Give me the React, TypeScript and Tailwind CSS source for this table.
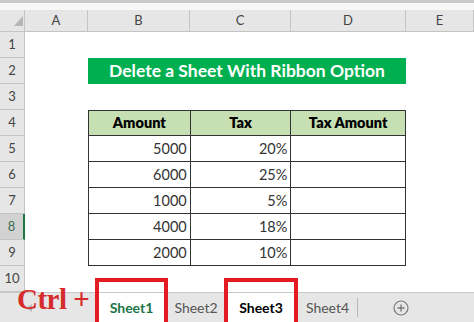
const cols = [
  { label: "A", w: "w-[63px]" },
  { label: "B", w: "w-[102px]" },
  { label: "C", w: "w-[101px]" },
  { label: "D", w: "w-[115px]" },
  { label: "E", w: "w-[68px]" },
];

const rows = [
  ["5000", "20%"],
  ["6000", "25%"],
  ["1000", "5%"],
  ["4000", "18%"],
  ["2000", "10%"],
];

export default function App() {
  return (
    <div className="relative w-[474px] h-[322px] overflow-hidden bg-white font-['Lato','Open_Sans',sans-serif] text-[#444]">
      <div className="h-[3px] bg-[#c9c9c9]" />
      <div className="h-[7px] bg-[#f7f7f7]" />

      {/* column headers */}
      <div className="flex h-[22px] bg-[#e6e6e6] border-b border-[#c4c4c4]">
        <div className="relative w-[25px] border-r border-[#c4c4c4]">
          <svg className="absolute left-[14px] top-[6px]" width="9" height="10" viewBox="0 0 9 10">
            <polygon points="9,0 9,10 0,10" fill="#b5b5b5" />
          </svg>
        </div>
        {cols.map((c) => (
          <div
            key={c.label}
            className={`${c.w} flex items-center justify-center border-r border-[#c4c4c4] text-[13px] text-[#444]`}
          >
            {c.label}
          </div>
        ))}
      </div>

      <div className="flex">
        {/* row headers */}
        <div className="flex flex-col w-[25px]">
          {[1, 2, 3, 4, 5, 6, 7, 8, 9, 10].map((n) => (
            <div
              key={n}
              className={`h-[26px] flex items-center justify-center border-b border-[#c4c4c4] text-[13px] ${
                n === 8
                  ? "bg-[#d2d2d2] text-[#3d6b4e] border-r-2 border-r-[#217346]"
                  : "bg-[#e6e6e6] border-r border-r-[#c4c4c4]"
              }`}
            >
              {n}
            </div>
          ))}
        </div>

        {/* sheet content */}
        <div className="flex flex-col pl-[63px]">
          <div className="h-[26px]" />
          <div className="h-[26px] w-[318px] bg-[#00b050] flex items-center justify-center text-white font-bold text-[17.5px]">
            Delete a Sheet With Ribbon Option
          </div>
          <div className="h-[26px]" />
          <table className="border-collapse w-[318px] text-[14.5px] text-[#333]">
            <thead>
              <tr className="h-[25px] bg-[#c6e0b4] text-black">
                <th className="w-[102px] border-[1.5px] border-[#333] font-extrabold">Amount</th>
                <th className="w-[101px] border-[1.5px] border-[#333] font-extrabold">Tax</th>
                <th className="w-[115px] border-[1.5px] border-[#333] font-extrabold">Tax Amount</th>
              </tr>
            </thead>
            <tbody>
              {rows.map(([a, t]) => (
                <tr key={a} className="h-[26px]">
                  <td className="border-[1.5px] border-[#333] text-right pr-[3px]">{a}</td>
                  <td className="border-[1.5px] border-[#333] text-right pr-[3px]">{t}</td>
                  <td className="border-[1.5px] border-[#333]" />
                </tr>
              ))}
            </tbody>
          </table>
        </div>
      </div>

      {/* sheet tabs */}
      <div className="absolute left-0 bottom-0 w-full h-[30px] flex items-stretch bg-[#e6e6e6] border-t border-[#c8c8c8] text-[14px] text-[#555]">
        <div className="w-[95px] flex items-center pl-[26px]">
          <svg width="6" height="8" viewBox="0 0 6 8">
            <polygon points="6,0 6,8 0,4" fill="#b8b8b8" />
          </svg>
        </div>
        <div className="w-[73px] bg-white flex items-center justify-center font-bold text-[#217346]">Sheet1</div>
        <div className="w-[56px] flex items-center justify-center">Sheet2</div>
        <div className="w-[74px] bg-white flex items-center justify-center font-bold text-black">Sheet3</div>
        <div className="w-[59px] flex items-center justify-center">Sheet4</div>
        <div className="w-px my-[5px] bg-[#b8b8b8]" />
        <div className="flex-1 flex items-center pl-[35px]">
          <svg width="16" height="16" viewBox="0 0 16 16">
            <circle cx="8" cy="8" r="7" fill="none" stroke="#7a7a7a" strokeWidth="1.2" />
            <path d="M8 4.5v7M4.5 8h7" stroke="#7a7a7a" strokeWidth="1.4" />
          </svg>
        </div>
      </div>

      {/* annotations */}
      <div className="absolute left-[95px] top-[278px] w-[73px] h-[50px] border-4 border-[#e31b23]" />
      <div className="absolute left-[224px] top-[278px] w-[74px] h-[50px] border-4 border-[#e31b23]" />
      <div className="absolute left-[17px] top-[285px] font-['Liberation_Serif',serif] font-bold text-[29px] leading-none tracking-[-0.5px] text-[#d62b2b]">
        Ctrl +
      </div>
    </div>
  );
}
